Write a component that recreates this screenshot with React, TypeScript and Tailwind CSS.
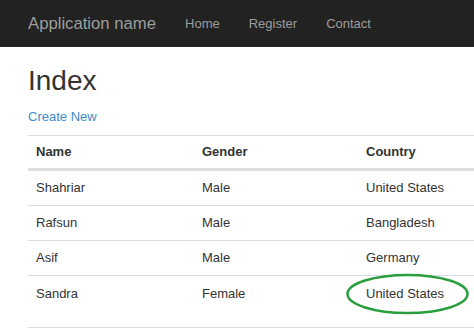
import React from "react";

const rows = [
  ["Shahriar", "Male", "United States"],
  ["Rafsun", "Male", "Bangladesh"],
  ["Asif", "Male", "Germany"],
  ["Sandra", "Female", "United States"],
];

export default function App() {
  return (
    <div
      className="relative w-[474px] h-[334px] overflow-hidden bg-white text-[#333]"
      style={{ fontFamily: '"Liberation Sans", Arial, sans-serif' }}
    >
      <nav className="h-[47px] bg-[#222] flex items-center pl-[28px] gap-[29px] text-[#9d9d9d]">
        <span className="text-[16.7px]">Application name</span>
        <span className="text-[13px]">Home</span>
        <span className="text-[13px]">Register</span>
        <span className="text-[13px]">Contact</span>
      </nav>
      <div className="pl-[28px]">
        <h2 className="text-[28px] leading-[30px] mt-[19px] mb-[0px]">Index</h2>
        <div className="mt-[12px] h-[21px] text-[13px] leading-[18px] text-[#428bca]">Create New</div>
        <div className="mt-[6px] text-[13px] leading-[18px]">
          <div className="flex h-[35px] items-center border-t border-[#ddd] border-b-2 font-bold">
            <div className="w-[166px] pl-[8px]">Name</div>
            <div className="w-[164px] pl-[8px]">Gender</div>
            <div className="flex-1 pl-[8px]">Country</div>
          </div>
          {rows.map((r, i) => {
            const last = i === rows.length - 1;
            return (
              <div
                key={i}
                className={
                  last
                    ? "flex h-[53px] items-start pt-[9px] border-t border-b border-[#ddd]"
                    : "flex h-[35px] items-center border-t border-[#ddd]"
                }
              >
                <div className="w-[166px] pl-[8px]">{r[0]}</div>
                <div className="w-[164px] pl-[8px]">{r[1]}</div>
                <div className="flex-1 pl-[8px]">{r[2]}</div>
              </div>
            );
          })}
        </div>
      </div>
      <svg
        className="absolute left-[344px] top-[273px]"
        width="128"
        height="44"
        viewBox="0 0 128 44"
      >
        <ellipse cx="63.5" cy="21" rx="60" ry="19" fill="none" stroke="#2a9d3c" strokeWidth="2.5" />
      </svg>
    </div>
  );
}
